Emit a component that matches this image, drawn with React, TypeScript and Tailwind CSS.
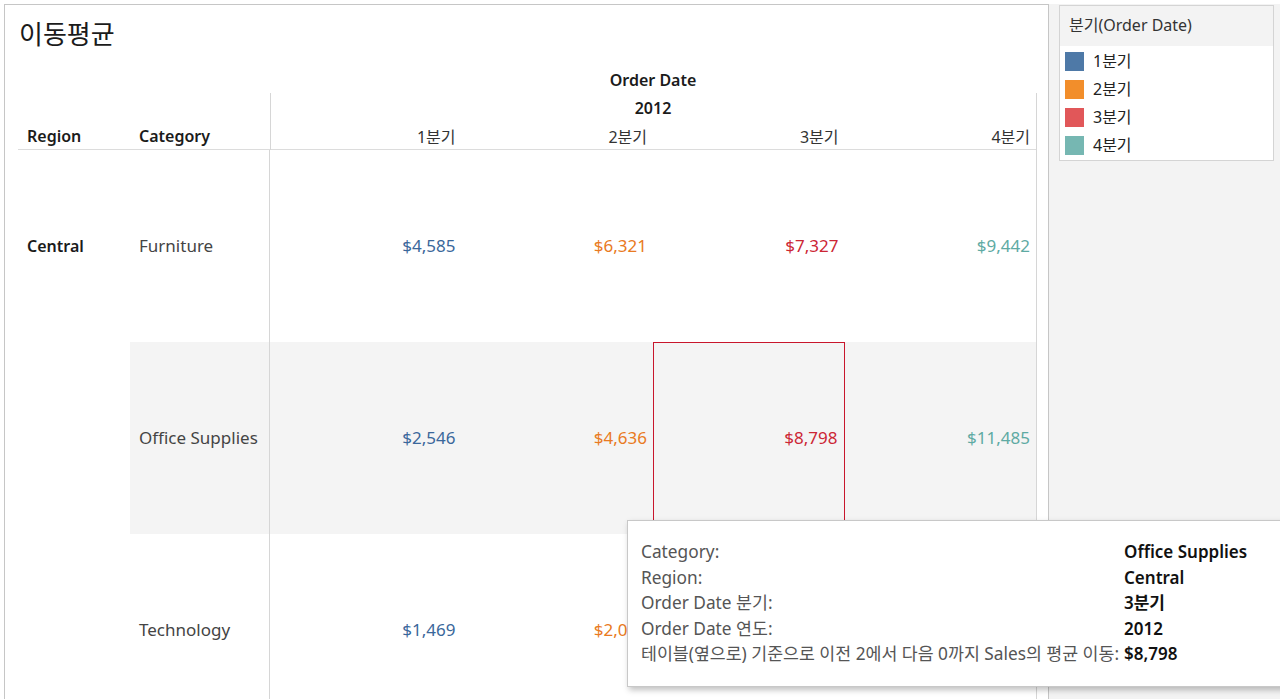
import React from 'react';

const font = { fontFamily: '"Noto Sans", "Noto Sans CJK KR", sans-serif' };

const quarters = ['1분기', '2분기', '3분기', '4분기'];
const swatches = ['bg-[#4e79a7]', 'bg-[#f28e2b]', 'bg-[#e15759]', 'bg-[#76b7b2]'];
const textColors = ['text-[#3a679b]', 'text-[#e97a22]', 'text-[#cc2635]', 'text-[#5eaaa3]'];

const rows = [
  { region: 'Central', category: 'Furniture', values: ['$4,585', '$6,321', '$7,327', '$9,442'] },
  { region: '', category: 'Office Supplies', values: ['$2,546', '$4,636', '$8,798', '$11,485'] },
  { region: '', category: 'Technology', values: ['$1,469', '$2,035', '$5,102', '$8,310'] },
];

const tipRows = [
  ['Category:', 'Office Supplies'],
  ['Region:', 'Central'],
  ['Order Date 분기:', '3분기'],
  ['Order Date 연도:', '2012'],
  ['테이블(옆으로) 기준으로 이전 2에서 다음 0까지 Sales의 평균 이동:', '$8,798'],
];

export default function App() {
  return (
    <div className="relative w-[1280px] h-[699px] overflow-hidden bg-white flex pt-1 pl-1" style={font}>
      {/* worksheet */}
      <div className="w-[1045px] shrink-0 border-l border-t border-r border-[#c6c6c6] bg-white flex flex-col overflow-hidden">
        <div className="shrink-0 h-[61px] pl-[14px] pt-[12px] text-[26px] leading-[34px] text-[#1b1b1b]">이동평균</div>

        <div className="shrink-0 pl-[13px] w-[1031px]">
          {/* header */}
          <div className="flex border-b border-[#dcdcdc] h-[84px]">
            <div className="w-[112px] flex items-end pl-[9px] text-[16px] leading-[25px] font-semibold text-[#1b1b1b]">Region</div>
            <div className="w-[140px] flex items-end pl-[9px] text-[16px] leading-[25px] font-semibold text-[#1b1b1b]">Category</div>
            <div className="flex-1 flex flex-col">
              <div className="h-[28px] text-center text-[16px] leading-[28px] font-semibold text-[#1b1b1b]">Order Date</div>
              <div className="h-[28px] text-center text-[16px] leading-[28px] font-semibold text-[#1b1b1b]">2012</div>
              <div className="h-[28px] grid grid-cols-4">
                {quarters.map((q) => (
                  <div key={q} className="text-right pr-[6px] text-[16px] leading-[31px] text-[#333]">{q}</div>
                ))}
              </div>
            </div>
          </div>

          {/* body */}
          {rows.map((r, ri) => (
            <div key={r.category} className="flex h-[192px]">
              <div className="w-[112px] flex items-center pl-[9px] text-[16px] font-semibold text-[#1b1b1b]">{r.region}</div>
              <div className={`flex-1 flex ${ri === 1 ? 'bg-[#f4f4f4]' : ''}`}>
                <div className="w-[140px] flex items-center pl-[9px] text-[17px] text-[#444] border-r border-[#d6d6d6]">{r.category}</div>
                <div className="flex-1 grid grid-cols-4">
                  {r.values.map((v, vi) => (
                    <div
                      key={vi}
                      className={`flex items-center justify-end pr-[6px] text-[17px] ${textColors[vi]} ${ri === 1 && vi === 2 ? 'border border-[#c8162c]' : ''}`}
                    >
                      {v}
                    </div>
                  ))}
                </div>
              </div>
            </div>
          ))}
        </div>
      </div>

      {/* right pane with legend */}
      <div className="flex-1 bg-[#f3f3f3] pl-[10px] pt-[1px]">
        <div className="w-[215px] border border-[#d4d4d4] bg-white">
          <div className="h-[40px] bg-[#f3f3f3] pl-[9px] text-[16px] leading-[38px] text-[#333]">분기(Order Date)</div>
          <div className="pt-[1px] pb-[1px]">
            {quarters.map((q, i) => (
              <div key={q} className="flex items-center h-[28px] pl-[5px] gap-[9px]">
                <span className={`w-[19px] h-[19px] ${swatches[i]}`} />
                <span className="text-[16px] text-[#222]">{q}</span>
              </div>
            ))}
          </div>
        </div>
      </div>

      {/* pane divider lines */}
      <div className="absolute left-[1036px] top-[93px] w-px h-[606px] bg-[#d6d6d6]" />
      <div className="absolute left-[270px] top-[93px] w-px h-[57px] bg-[#d6d6d6]" />

      {/* tooltip */}
      <div className="absolute left-[627px] top-[520px] w-[680px] h-[167px] bg-white border border-[#c8c8c8] shadow-[2px_3px_6px_rgba(0,0,0,0.25)] pl-[13px] pt-[18px]">
        <div className="grid grid-cols-[483px_auto]">
          {tipRows.map(([k, v]) => (
            <React.Fragment key={k}>
              <div className="text-[17.3px] leading-[25.6px] text-[#555] whitespace-nowrap">{k}</div>
              <div className="text-[17px] leading-[25.6px] font-semibold text-[#111] whitespace-nowrap">{v}</div>
            </React.Fragment>
          ))}
        </div>
      </div>
    </div>
  );
}
